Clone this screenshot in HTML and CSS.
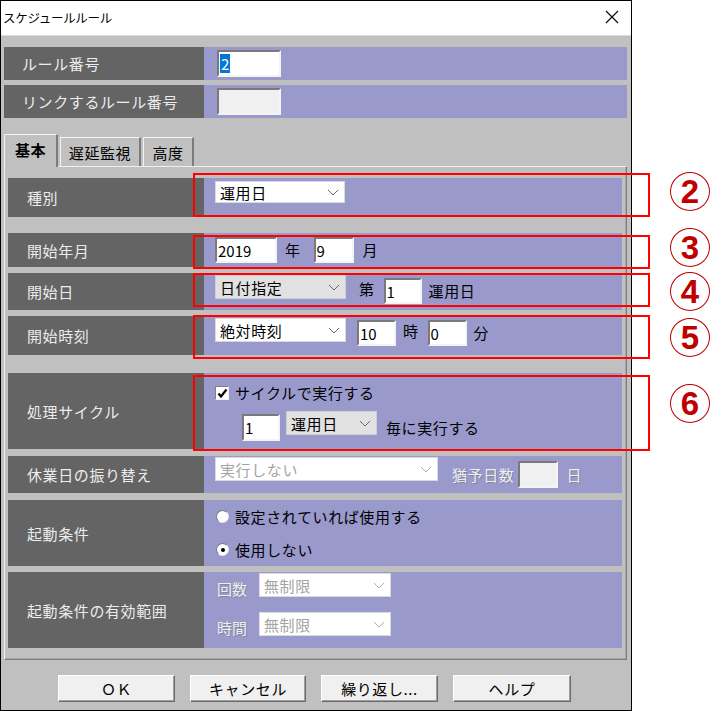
FILE: index.html
```html
<!DOCTYPE html>
<html lang="ja">
<head>
  <meta charset="UTF-8">
  <title>スケジュールルール</title>
  <link rel="stylesheet" href="styles.css">
</head>
<body>
  <div class="dialog">
    <div class="titlebar">
      <span class="title">スケジュールルール</span>
      <svg class="close" width="14" height="14" viewBox="0 0 14 14">
        <path d="M1 1 L13 13 M13 1 L1 13" stroke="#111" stroke-width="1.3" fill="none"/>
      </svg>
    </div>

    <div class="content">
      <div class="row top">
        <div class="label">ルール番号</div>
        <div class="value">
          <span class="edit w64 h27"><span class="selected">2</span></span>
        </div>
      </div>
      <div class="row top">
        <div class="label">リンクするルール番号</div>
        <div class="value">
          <span class="edit w64 h27 off"></span>
        </div>
      </div>

      <!-- タブ -->
      <div class="tabs">
        <span class="tab active">基本</span>
        <span class="tab w81">遅延監視</span>
        <span class="tab w51">高度</span>
      </div>

      <div class="panel">
        <div class="row r-kind">
          <div class="label">種別</div>
          <div class="value">
            <span class="combo w130 h22">運用日<svg class="chev" width="12" height="7" viewBox="0 0 12 7"><path d="M1 1 L6 6 L11 1" stroke="#6a6a6a" fill="none"/></svg></span>
          </div>
        </div>

        <div class="row r-month">
          <div class="label">開始年月</div>
          <div class="value">
            <span class="edit w62">2019</span>
            <span class="txt t-year">年</span>
            <span class="edit w40">9</span>
            <span class="txt t-month">月</span>
          </div>
        </div>

        <div class="row r-day">
          <div class="label">開始日</div>
          <div class="value">
            <span class="combo gray w131">日付指定<svg class="chev" width="12" height="7" viewBox="0 0 12 7"><path d="M1 1 L6 6 L11 1" stroke="#6a6a6a" fill="none"/></svg></span>
            <span class="txt t-dai">第</span>
            <span class="edit w38 down3">1</span>
            <span class="txt t-unyo down3">運用日</span>
          </div>
        </div>

        <div class="row r-time">
          <div class="label">開始時刻</div>
          <div class="value">
            <span class="combo w131">絶対時刻<svg class="chev" width="12" height="7" viewBox="0 0 12 7"><path d="M1 1 L6 6 L11 1" stroke="#6a6a6a" fill="none"/></svg></span>
            <span class="edit w39 down2 t-hour-in">10</span>
            <span class="txt t-hour down2">時</span>
            <span class="edit w39 down2">0</span>
            <span class="txt t-min down2">分</span>
          </div>
        </div>

        <div class="row r-cycle">
          <div class="label">処理サイクル</div>
          <div class="value col">
            <div class="line1">
              <span class="check">
                <svg width="11" height="11" viewBox="0 0 11 11"><path d="M1.5 5.5 L4 8.5 L9.5 1.5" stroke="#000" stroke-width="2.2" fill="none"/></svg>
              </span>
              <span class="txt">サイクルで実行する</span>
            </div>
            <div class="line2">
              <span class="edit w38 h27 down3">1</span>
              <span class="combo gray w91 c-cycle">運用日<svg class="chev" width="12" height="7" viewBox="0 0 12 7"><path d="M1 1 L6 6 L11 1" stroke="#6a6a6a" fill="none"/></svg></span>
              <span class="txt t-every">毎に実行する</span>
            </div>
          </div>
        </div>

        <div class="row r-holiday">
          <div class="label">休業日の振り替え</div>
          <div class="value">
            <span class="combo off w223">実行しない<svg class="chev" width="12" height="7" viewBox="0 0 12 7"><path d="M1 1 L6 6 L11 1" stroke="#b0b0b0" fill="none"/></svg></span>
            <span class="txt dim t-grace">猶予日数</span>
            <span class="edit off w40 h27 down4"></span>
            <span class="txt dim t-nichi">日</span>
          </div>
        </div>

        <div class="row r-start">
          <div class="label">起動条件</div>
          <div class="value col">
            <div class="opt"><span class="radio"></span><span class="txt">設定されていれば使用する</span></div>
            <div class="opt"><span class="radio on"></span><span class="txt">使用しない</span></div>
          </div>
        </div>

        <div class="row r-range">
          <div class="label">起動条件の有効範囲</div>
          <div class="value col">
            <div class="limit">
              <span class="txt dim sub">回数</span>
              <span class="combo off w132">無制限<svg class="chev" width="12" height="7" viewBox="0 0 12 7"><path d="M1 1 L6 6 L11 1" stroke="#b0b0b0" fill="none"/></svg></span>
            </div>
            <div class="limit second">
              <span class="txt dim sub">時間</span>
              <span class="combo off w132">無制限<svg class="chev" width="12" height="7" viewBox="0 0 12 7"><path d="M1 1 L6 6 L11 1" stroke="#b0b0b0" fill="none"/></svg></span>
            </div>
          </div>
        </div>
      </div>

      <div class="buttons">
        <span class="btn w117">ＯＫ</span>
        <span class="btn w116">キャンセル</span>
        <span class="btn w117">繰り返し...</span>
        <span class="btn w118">ヘルプ</span>
      </div>
    </div>
  </div>

  <!-- 注釈 -->
  <div class="note n2"></div>
  <div class="note n3"></div>
  <div class="note n4"></div>
  <div class="note n5"></div>
  <div class="note n6"></div>
  <span class="num m2">2</span>
  <span class="num m3">3</span>
  <span class="num m4">4</span>
  <span class="num m5">5</span>
  <span class="num m6">6</span>
</body>
</html>
```

FILE: styles.css
```css
/* スケジュールルール ダイアログ */
* {
  box-sizing: border-box;
}
body {
  margin: 0;
  background-color: #fff;
  font-family: "Noto Sans CJK JP", sans-serif;
  color: #000;
}
.dialog {
  width: 632px;
  height: 711px;
  border: 1px solid #000;
  background-color: #c0c0c0;
  display: flex;
  flex-direction: column;
  font-size: 15px;
  letter-spacing: 0.6px;
}
.titlebar {
  height: 35px;
  background-color: #fff;
  border-bottom: 1px solid #dcdcdc;
  display: flex;
  align-items: center;
  justify-content: space-between;
  padding: 0 12px 2px 2px;
}
.title {
  font-size: 12.5px;
  letter-spacing: -0.3px;
}
.content {
  padding: 11px 4px 0 3px;
}
.row {
  display: flex;
}
.row.top {
  height: 33px;
}
.row.top + .row.top {
  margin-top: 5px;
}
.label {
  background-color: #646464;
  color: #ececec;
  display: flex;
  align-items: center;
  width: 196px;
  padding-left: 19px;
  flex-shrink: 0;
}
.row.top .label {
  width: 200px;
  padding-left: 18px;
}
.value {
  flex: 1;
  background-color: #9999cc;
  display: flex;
  align-items: flex-start;
  padding-left: 11px;
}
.row.top .value {
  align-items: center;
  padding-left: 13px;
}
.value.col {
  flex-direction: column;
}

/* タブ */
.tabs {
  display: flex;
  align-items: flex-end;
  height: 32px;
  margin-top: 16px;
  gap: 2px;
}
.tab {
  height: 29px;
  width: 54px;
  border: 1px solid #f4f4f4;
  border-bottom: none;
  border-right: 2px solid #7c7c7c;
  display: flex;
  align-items: center;
  justify-content: center;
}
.tab.active {
  height: 33px;
  margin-bottom: -1px;
  position: relative;
  z-index: 1;
  background-color: #c0c0c0;
  font-weight: bold;
  padding-bottom: 3px;
}
.tab.w81 { width: 81px; }
.tab.w51 { width: 51px; }

.panel {
  border: 1px solid;
  border-color: #f0f0f0 #7c7c7c #7c7c7c #f0f0f0;
  box-shadow: inset -1px -1px 0 #a8a8a8;
  padding: 11px 4px 11px 3px;
}

/* 行ごとの高さ */
.r-kind { height: 39px; }
.r-kind .value { padding-top: 3px; }
.r-month { height: 34px; margin-top: 16px; }
.r-month .value { align-items: center; }
.r-day { height: 37px; margin-top: 6px; }
.r-day .value { padding-top: 2px; }
.r-time { height: 39px; margin-top: 6px; }
.r-time .value { padding-top: 2px; }
.r-cycle { height: 76px; margin-top: 18px; }
.r-cycle .value { padding-top: 9px; }
.r-holiday { height: 37px; margin-top: 7px; }
.r-holiday .value { padding-top: 1px; }
.r-start { height: 66px; margin-top: 7px; }
.r-range { height: 76px; margin-top: 6px; }
.r-range .value { padding-top: 1px; }

/* 入力欄 */
.edit {
  display: inline-flex;
  align-items: center;
  height: 26px;
  background-color: #fff;
  border: 2px solid;
  border-color: #7a7a7a #f4f4f4 #f4f4f4 #7a7a7a;
  padding-left: 1px;
  letter-spacing: 0;
  flex-shrink: 0;
}
.edit.off {
  background-color: #f0f0f0;
}
.edit.h27 { height: 27px; }
.selected {
  background-color: #0078d7;
  color: #fff;
  line-height: 19px;
  padding: 0 1px;
}
.w38 { width: 38px; }
.w39 { width: 39px; }
.w40 { width: 40px; }
.w62 { width: 62px; }
.w64 { width: 64px; }

/* コンボボックス */
.combo {
  display: inline-flex;
  align-items: center;
  justify-content: space-between;
  height: 24px;
  background-color: #fff;
  border: 1px solid #dadada;
  padding: 0 5px 0 4px;
  flex-shrink: 0;
}
.combo.h22 { height: 22px; }
.combo.gray {
  background-color: #e1e1e1;
  border-color: #cfcfcf;
}
.combo.off {
  color: #a4a4a4;
}
.w91 { width: 91px; }
.w130 { width: 130px; }
.w131 { width: 131px; }
.w132 { width: 132px; }
.w223 { width: 223px; }

.txt {
  line-height: 26px;
  white-space: nowrap;
}
.dim {
  color: #eeeeee;
  text-shadow: 1px 1px 0 #85859c;
}
.down2 { margin-top: 2px; }
.down3 { margin-top: 3px; }
.down4 { margin-top: 4px; }

.t-year { margin: 0 13px 0 8px; }
.t-month { margin-left: 9px; }
.t-dai { margin: 0 9px 0 13px; line-height: 28px; }
.t-unyo { margin-left: 7px; }
.t-hour-in { margin-left: 11px; }
.t-hour { margin: 0 9px 0 7px; }
.t-min { margin-left: 7px; }

/* 処理サイクル */
.line1 {
  display: flex;
  align-items: center;
  height: 22px;
}
.check {
  width: 14px;
  height: 14px;
  background-color: #fff;
  border: 1px solid;
  border-color: #808080 #f4f4f4 #f4f4f4 #808080;
  display: flex;
  align-items: center;
  justify-content: center;
  margin-right: 6px;
}
.line2 {
  display: flex;
  align-items: flex-start;
  margin-top: 7px;
  padding-left: 27px;
}
.c-cycle { margin-left: 6px; }
.t-every { margin: 4px 0 0 9px; }

/* 休業日 */
.t-grace { margin: 4px 4px 0 14px; line-height: 27px; }
.t-nichi { margin: 4px 0 0 8px; line-height: 27px; }

/* 起動条件 */
.opt {
  display: flex;
  align-items: center;
  height: 33px;
  padding-left: 1px;
}
.radio {
  width: 13px;
  height: 13px;
  border-radius: 50%;
  background-color: #fff;
  border: 1px solid;
  border-color: #7a7a7a #e8e8e8 #e8e8e8 #7a7a7a;
  margin-right: 6px;
  position: relative;
}
.radio.on::after {
  content: "";
  position: absolute;
  left: 3.5px;
  top: 3.5px;
  width: 4px;
  height: 4px;
  border-radius: 50%;
  background-color: #000;
}

/* 有効範囲 */
.limit {
  display: flex;
  align-items: flex-start;
  height: 24px;
  padding-left: 2px;
}
.limit.second {
  margin-top: 15px;
}
.limit .sub {
  width: 42px;
  margin-top: 3px;
  letter-spacing: 0;
}

/* ボタン */
.buttons {
  display: flex;
  gap: 15px;
  margin-top: 15px;
  padding-left: 54px;
}
.btn {
  height: 27px;
  background-color: #f0f0f0;
  border: 1px solid;
  border-color: #fff #6a6a6a #6a6a6a #fff;
  box-shadow: inset -1px -1px 0 #a0a0a0;
  display: flex;
  align-items: center;
  justify-content: center;
}
.w116 { width: 116px; }
.w117 { width: 117px; }
.w118 { width: 118px; }

/* 注釈 */
.note {
  position: absolute;
  left: 193px;
  width: 457px;
  border: 2px solid #ff0000;
}
.n2 { top: 173px; height: 44px; }
.n3 { top: 235px; height: 34px; }
.n4 { top: 273px; height: 34px; }
.n5 { top: 315px; height: 44px; }
.n6 { top: 375px; height: 76px; }
.num {
  position: absolute;
  left: 670px;
  width: 40px;
  height: 39px;
  border: 1.5px solid #c00000;
  border-radius: 50%;
  display: flex;
  align-items: center;
  justify-content: center;
  font-family: "Liberation Sans", sans-serif;
  font-size: 33px;
  font-weight: bold;
  line-height: 1;
  color: #c00000;
}
.m2 { top: 172px; }
.m3 { top: 228px; }
.m4 { top: 272px; }
.m5 { top: 318px; }
.m6 { top: 384px; }
```
